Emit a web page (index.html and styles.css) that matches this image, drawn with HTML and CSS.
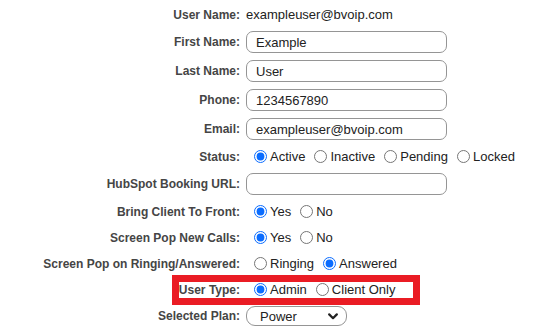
FILE: index.html
```html
<!DOCTYPE html>
<html>
<head>
<meta charset="utf-8">
<link rel="stylesheet" href="styles.css">
</head>
<body>
<form class="form">
  <div class="row text-row">
    <label class="lbl">User Name:</label>
    <div class="val">exampleuser@bvoip.com</div>
  </div>
  <div class="row input-row">
    <label class="lbl">First Name:</label>
    <div class="val"><input class="field" type="text" value="Example"></div>
  </div>
  <div class="row input-row">
    <label class="lbl">Last Name:</label>
    <div class="val"><input class="field" type="text" value="User"></div>
  </div>
  <div class="row input-row">
    <label class="lbl">Phone:</label>
    <div class="val"><input class="field" type="text" value="1234567890"></div>
  </div>
  <div class="row input-row">
    <label class="lbl">Email:</label>
    <div class="val"><input class="field" type="text" value="exampleuser@bvoip.com"></div>
  </div>
  <div class="row text-row">
    <label class="lbl">Status:</label>
    <div class="val radios">
      <label class="opt"><input type="radio" name="status" checked>Active</label>
      <label class="opt"><input type="radio" name="status">Inactive</label>
      <label class="opt"><input type="radio" name="status">Pending</label>
      <label class="opt"><input type="radio" name="status">Locked</label>
    </div>
  </div>
  <div class="row input-row">
    <label class="lbl">HubSpot Booking URL:</label>
    <div class="val"><input class="field" type="text" value=""></div>
  </div>
  <div class="row text-row">
    <label class="lbl">Bring Client To Front:</label>
    <div class="val radios">
      <label class="opt"><input type="radio" name="front" checked>Yes</label>
      <label class="opt"><input type="radio" name="front">No</label>
    </div>
  </div>
  <div class="row text-row">
    <label class="lbl">Screen Pop New Calls:</label>
    <div class="val radios">
      <label class="opt"><input type="radio" name="newcalls" checked>Yes</label>
      <label class="opt"><input type="radio" name="newcalls">No</label>
    </div>
  </div>
  <div class="row text-row">
    <label class="lbl">Screen Pop on Ringing/Answered:</label>
    <div class="val radios">
      <label class="opt"><input type="radio" name="ring">Ringing</label>
      <label class="opt"><input type="radio" name="ring" checked>Answered</label>
    </div>
  </div>
  <div class="row text-row highlight">
    <label class="lbl">User Type:</label>
    <div class="val radios">
      <label class="opt"><input type="radio" name="utype" checked>Admin</label>
      <label class="opt"><input type="radio" name="utype">Client Only</label>
    </div>
  </div>
  <div class="row select-row">
    <label class="lbl">Selected Plan:</label>
    <div class="val">
      <div class="select-wrap">
        <select class="select">
          <option>Power</option>
        </select>
        <svg class="chev" width="10" height="7" viewBox="0 0 10 7"><path d="M1.2 1.4 L5 5.2 L8.8 1.4" fill="none" stroke="#222" stroke-width="2.2" stroke-linecap="round" stroke-linejoin="round"/></svg>
      </div>
    </div>
  </div>
</form>
</body>
</html>
```

FILE: styles.css
```css
html, body {
  margin: 0;
  padding: 0;
  background: #fff;
}
body {
  font-family: "Liberation Sans", Arial, sans-serif;
  color: #222;
}
.form {
  display: flex;
  flex-direction: column;
  gap: 7px;
  padding-top: 5px;
  margin: 0;
}
.row {
  display: grid;
  grid-template-columns: 240px 1fr;
  column-gap: 6px;
  align-items: center;
  position: relative;
}
.text-row { height: 19px; }
.input-row { height: 22px; }
.select-row { height: 20px; }
.lbl {
  text-align: right;
  font-weight: bold;
  font-size: 12px;
  color: #454545;
  white-space: nowrap;
}
.val {
  font-size: 13px;
  color: #222;
  white-space: nowrap;
}
.field {
  box-sizing: border-box;
  width: 201px;
  height: 22px;
  border: 1px solid #959595;
  border-radius: 7px;
  padding: 0 9px;
  font-family: "Liberation Sans", Arial, sans-serif;
  font-size: 13px;
  color: #222;
  background: #fff;
  outline: none;
}
.radios {
  display: flex;
  align-items: center;
  padding-left: 3px;
}
.opt {
  display: inline-flex;
  align-items: center;
  margin-right: 4px;
}
.opt input {
  width: 13px;
  height: 13px;
  margin: 0 3px 0 5px;
  accent-color: #0a6cff;
}
.select-wrap {
  position: relative;
  display: inline-block;
  width: 101px;
  height: 20px;
}
.select {
  -webkit-appearance: none;
  appearance: none;
  box-sizing: border-box;
  width: 101px;
  height: 20px;
  border: 1px solid #959595;
  border-radius: 9px;
  padding: 0 0 0 13px;
  font-family: "Liberation Sans", Arial, sans-serif;
  font-size: 13px;
  color: #222;
  background: #fff;
}
.chev {
  position: absolute;
  right: 9px;
  top: 7px;
}
.highlight::after {
  content: "";
  position: absolute;
  left: 172px;
  top: -5px;
  width: 248px;
  height: 30px;
  box-sizing: border-box;
  border: 7px solid #ea1c24;
  pointer-events: none;
}
```
